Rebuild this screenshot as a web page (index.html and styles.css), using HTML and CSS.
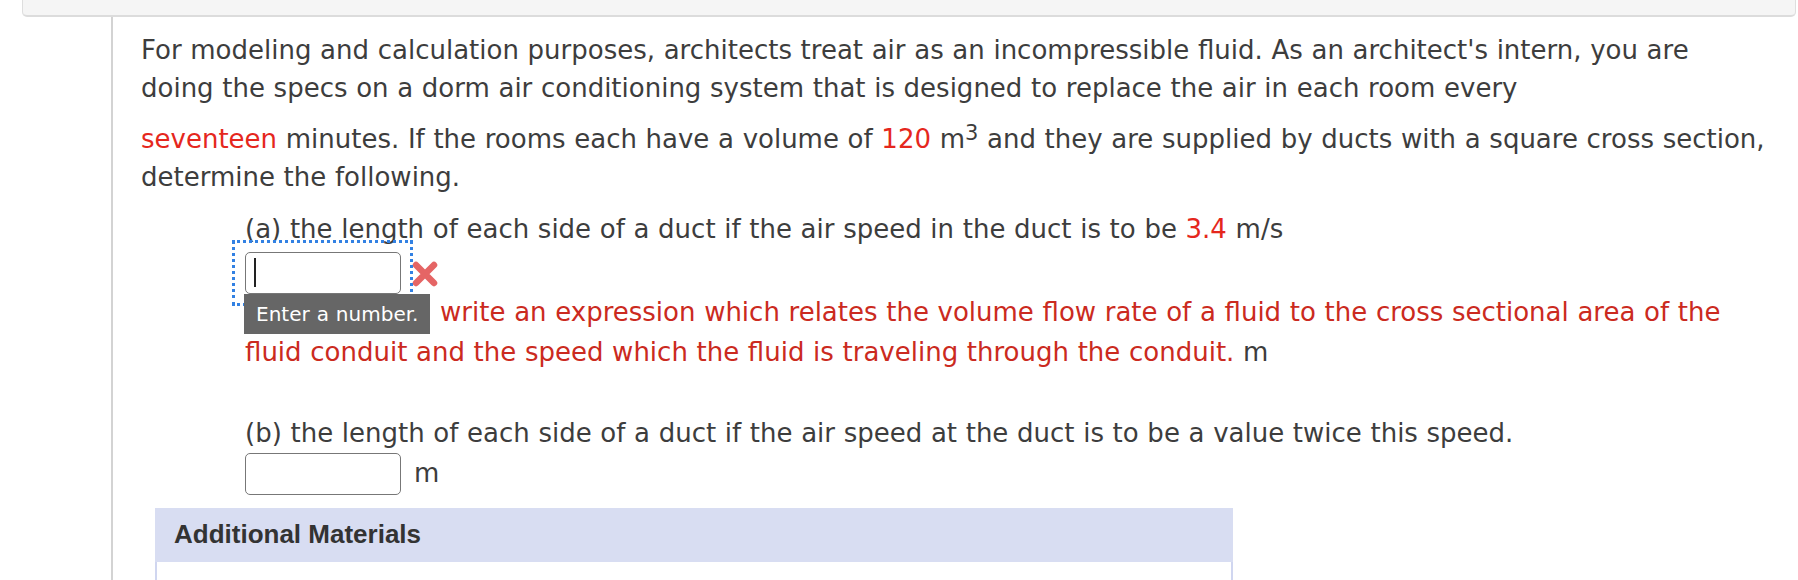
FILE: index.html
```html
<!DOCTYPE html>
<html lang="en">
<head>
<meta charset="utf-8">
<title>Question</title>
<link rel="stylesheet" href="styles.css">
</head>
<body>
<div class="topbar"></div>
<div class="main">
  <p class="question">For modeling and calculation purposes, architects treat air as an incompressible fluid. As an architect's intern, you are<br>doing the specs on a dorm air conditioning system that is designed to replace the air in each room every<br><span class="val">seventeen</span> minutes. If the rooms each have a volume of <span class="val">120</span> m<sup class="sup">3</sup> and they are supplied by ducts with a square cross section,<br>determine the following.</p>
  <div class="part">
    <div class="part-q">(a) the length of each side of a duct if the air speed in the duct is to be <span class="val">3.4</span> m/s</div>
    <div class="answer-row">
      <div class="focus-wrap"><div class="answer-box"><span class="caret"></span></div></div>
      <svg class="wrong" width="28" height="28" viewBox="0 0 28 28" aria-hidden="true">
        <defs>
          <filter id="soft" x="-20%" y="-20%" width="140%" height="140%">
            <feGaussianBlur stdDeviation="0.5"/>
          </filter>
        </defs>
        <path d="M5 5 L23 23 M23 5 L5 23" stroke="#e56565" stroke-width="6.5" stroke-linecap="round" fill="none" filter="url(#soft)"/>
      </svg>
    </div>
    <div class="feedback"><span class="tip">Enter a number.</span> <span class="fb-text">write an expression which relates the volume flow rate of a fluid to the cross sectional area of the<br>fluid conduit and the speed which the fluid is traveling through the conduit.</span> m</div>
    <div class="part-q part-b">(b) the length of each side of a duct if the air speed at the duct is to be a value twice this speed.</div>
    <div class="answer-row answer-row-b">
      <div class="answer-box"></div><span class="unit">m</span>
    </div>
  </div>
  <div class="materials">
    <div class="materials-head">Additional Materials</div>
    <div class="materials-body"></div>
  </div>
</div>
</body>
</html>
```

FILE: styles.css
```css
html, body {
  margin: 0;
  padding: 0;
  background: #ffffff;
  overflow: hidden;
}

body {
  font-family: "DejaVu Sans", Verdana, sans-serif;
  color: #3d3d3d;
  font-size: 26px;
  word-spacing: 0.4px;
}

.topbar {
  height: 15px;
  margin-left: 22px;
  margin-right: 2px;
  background: #f5f5f5;
  border: 1px solid #dedede;
  border-top: none;
  border-bottom: 2px solid #dcdcdc;
  border-radius: 0 0 5px 5px;
}

.main {
  margin-left: 111px;
  border-left: 2px solid #d3d3d3;
  padding-left: 28px;
  padding-top: 15px;
  height: 600px;
}

.question {
  margin: 0;
  line-height: 37.5px;
  white-space: nowrap;
}

.val {
  color: #e5271d;
}

.sup {
  display: inline-block;
  font-size: 21px;
  line-height: 21px;
  vertical-align: 8px;
  margin-top: 16px;
}

.part {
  padding-left: 104px;
  margin-top: 15px;
}

.part-q {
  line-height: 37.5px;
  white-space: nowrap;
}

.answer-row {
  display: flex;
  align-items: center;
  margin-top: 3px;
}

.focus-wrap {
  position: relative;
}

.focus-wrap::after {
  content: "";
  position: absolute;
  left: -13px;
  top: -12px;
  right: -12px;
  bottom: -12px;
  border: 3px dotted #3281e3;
  pointer-events: none;
  z-index: 1;
}

.answer-box {
  box-sizing: border-box;
  width: 156px;
  height: 42px;
  border: 1.5px solid #777777;
  border-radius: 5px;
  background: #fff;
  display: flex;
  align-items: center;
  padding-left: 8px;
}

.caret {
  display: block;
  width: 2px;
  height: 29px;
  background: #222;
}

.wrong {
  margin-left: 10px;
  margin-top: 2px;
}

.feedback {
  line-height: 37.5px;
  white-space: nowrap;
}

.tip {
  position: relative;
  z-index: 2;
  display: inline-block;
  height: 40px;
  line-height: 41px;
  padding: 0 12px;
  margin-left: -1px;
  margin-right: 1px;
  background: #666666;
  color: #ffffff;
  font-size: 20px;
  word-spacing: 0.6px;
}

.fb-text {
  color: #cb2a20;
}

.part-b {
  margin-top: 44px;
}

.answer-row-b {
  margin-top: 0;
}

.unit {
  margin-left: 13px;
  line-height: 37.5px;
}

.materials {
  margin-top: 13px;
  margin-left: 14px;
  width: 1078px;
}

.materials-head {
  height: 54px;
  display: flex;
  align-items: center;
  padding-left: 19px;
  background: #d8ddf2;
  font-family: "Liberation Sans", Arial, sans-serif;
  font-weight: bold;
  font-size: 26px;
  word-spacing: 0;
  color: #333333;
}

.materials-body {
  height: 100px;
  border-left: 2px solid #d0d6f0;
  border-right: 2px solid #d0d6f0;
  background: #fff;
}
```
